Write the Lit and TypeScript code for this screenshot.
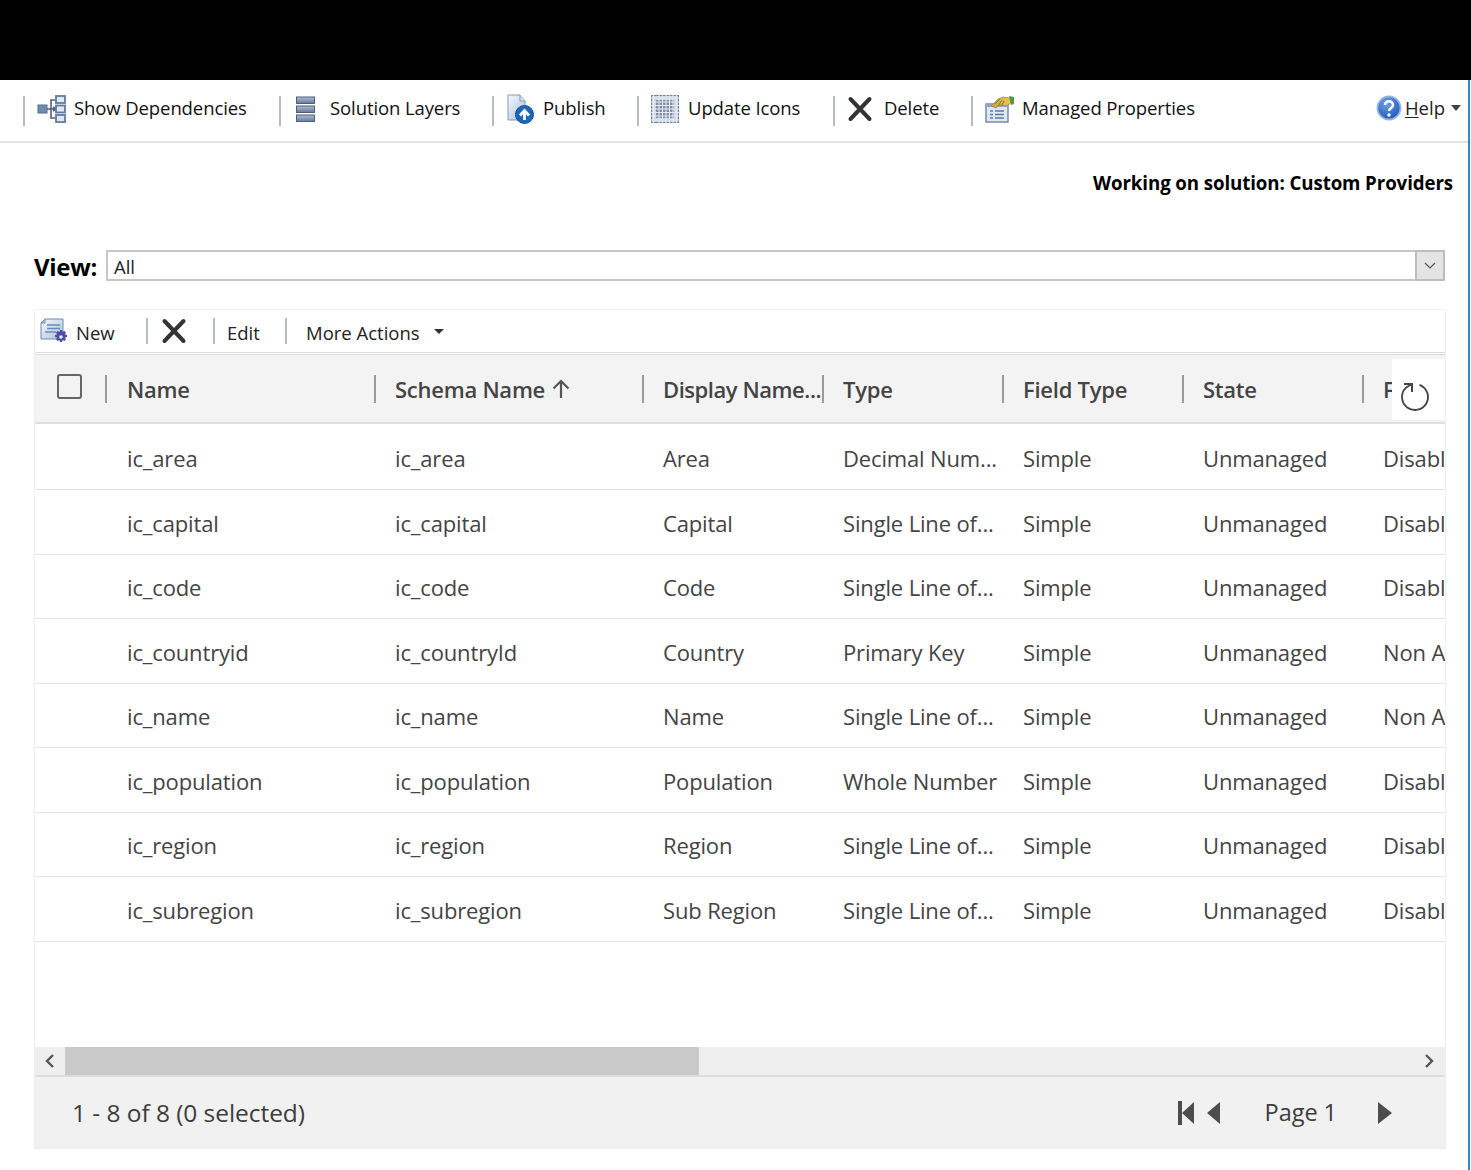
import { LitElement, html, css, svg } from "lit";
import { customElement } from "lit/decorators.js";

const rows = [
  ["ic_area", "ic_area", "Area", "Decimal Num...", "Simple", "Unmanaged", "Disabled"],
  ["ic_capital", "ic_capital", "Capital", "Single Line of...", "Simple", "Unmanaged", "Disabled"],
  ["ic_code", "ic_code", "Code", "Single Line of...", "Simple", "Unmanaged", "Disabled"],
  ["ic_countryid", "ic_countryId", "Country", "Primary Key", "Simple", "Unmanaged", "Non Applicable"],
  ["ic_name", "ic_name", "Name", "Single Line of...", "Simple", "Unmanaged", "Non Applicable"],
  ["ic_population", "ic_population", "Population", "Whole Number", "Simple", "Unmanaged", "Disabled"],
  ["ic_region", "ic_region", "Region", "Single Line of...", "Simple", "Unmanaged", "Disabled"],
  ["ic_subregion", "ic_subregion", "Sub Region", "Single Line of...", "Simple", "Unmanaged", "Disabled"],
];

const defs = svg`<defs>
  <linearGradient id="bl" x1="0" y1="0" x2="0" y2="1"><stop offset="0" stop-color="#aebfd6"/><stop offset="1" stop-color="#64799a"/></linearGradient>
  <linearGradient id="pg" x1="0" y1="0" x2="1" y2="1"><stop offset="0" stop-color="#f6f9fd"/><stop offset="1" stop-color="#a9c0df"/></linearGradient>
  <linearGradient id="gd" x1="0" y1="0" x2="1" y2="0"><stop offset="0" stop-color="#b9a25a"/><stop offset="1" stop-color="#eec94a"/></linearGradient>
</defs>`;

const iconDeps = html`<svg width="30" height="28" viewBox="0 0 30 28">
  <rect x="1" y="10" width="9" height="8" fill="#7089ad" stroke="#566f92"/>
  <path d="M10 14h9M14 14V5h4M14 14v9h4M16 12l3 2-3 2" fill="none" stroke="#4f6077" stroke-width="1.600"/>
  <rect x="19" y="1" width="9" height="7" fill="#dfe8f3" stroke="#607a9c" stroke-width="1.800"/>
  <rect x="19" y="10.500" width="9" height="7" fill="#dfe8f3" stroke="#607a9c" stroke-width="1.800"/>
  <rect x="19" y="20" width="9" height="7" fill="#dfe8f3" stroke="#607a9c" stroke-width="1.800"/></svg>`;
const iconLayers = html`<svg width="30" height="28" viewBox="0 0 30 28">${defs}
  <rect x="3.500" y="2" width="18" height="6.500" fill="url(#bl)" stroke="#505f76"/>
  <rect x="3.500" y="11" width="18" height="6.500" fill="url(#bl)" stroke="#505f76"/>
  <rect x="3.500" y="20" width="18" height="6.500" fill="url(#bl)" stroke="#505f76"/></svg>`;
const iconPublish = html`<svg width="30" height="30" viewBox="0 0 30 30">${defs}
  <path d="M2 1h12l5 6v19H2z" fill="url(#pg)" stroke="#8599b5"/>
  <path d="M14 1v6h5" fill="#dbe5f2" stroke="#8599b5"/>
  <circle cx="18.500" cy="20.500" r="9" fill="#1b68b8" stroke="#144f8c"/>
  <path d="M18.500 26v-8M14 21.500l4.500-5 4.500 5" fill="none" stroke="#fff" stroke-width="2.800"/></svg>`;
const iconGrid = html`<svg width="28" height="28" viewBox="0 0 28 28">
  <rect x="0.500" y="0.500" width="27" height="27" fill="#ccd6e4" stroke="#71849f"/>
  <rect x="5" y="5" width="18" height="18" fill="#808fa6"/>
  <path d="M2.500 0v28M8 0v28M11.500 0v28M15 0v28M18.500 0v28M22 0v28M25.500 0v28M0 3h28M0 7h28M0 10.500h28M0 14h28M0 17.500h28M0 21h28M0 25h28" stroke="#e6ebf2" stroke-width="1"/></svg>`;
const iconX = html`<svg width="26" height="26" viewBox="0 0 26 26">
  <path d="M3.500 3l19 20M22.500 3l-19 20" fill="none" stroke="#333" stroke-width="4" stroke-linecap="round"/></svg>`;
const iconManaged = html`<svg width="30" height="28" viewBox="0 0 30 28">${defs}
  <rect x="1" y="9" width="22" height="18" fill="#dfe8f3" stroke="#6f84a1" stroke-width="1.400"/>
  <rect x="1" y="9" width="22" height="3" fill="#8ea5c4"/>
  <path d="M5 16h3M10 16h9M5 19.500h3M10 19.500h9M5 23h3M10 23h9" stroke="#5d789e" stroke-width="1.400"/>
  <path d="M6 11L13 4l5-2 7 1 1 5-5 3-6-1-4 3z" fill="url(#gd)" stroke="#a0842a" stroke-width="0.700"/>
  <path d="M10 9l5-5M13 11l4-6M17 10l2-4" stroke="#8f7524" stroke-width="0.900"/>
  <path d="M24 1l5 1v7l-3 1z" fill="#4f9a3c"/></svg>`;
const iconHelp = html`<svg width="26" height="26" viewBox="0 0 26 26">
  <defs><radialGradient id="hp" cx="0.400" cy="0.300" r="0.800"><stop offset="0" stop-color="#6fa3ea"/><stop offset="1" stop-color="#184cb0"/></radialGradient></defs>
  <circle cx="13" cy="13" r="11.500" fill="url(#hp)" stroke="#8fb2e0" stroke-width="1.800"/>
  <path d="M9 10c0-5 8-5 8 0 0 3-4 3-4 6" fill="none" stroke="#fff" stroke-width="2.500"/>
  <circle cx="13" cy="20" r="1.700" fill="#fff"/></svg>`;
const iconNew = html`<svg width="28" height="26" viewBox="0 0 28 26">${defs}
  <path d="M5 1h18v20H1V5z" fill="url(#pg)" stroke="#6f89ad"/>
  <path d="M1 5h4V1z" fill="#b7c9e0" stroke="#6f89ad"/>
  <path d="M7 7h13M7 10.500h13M5 14h11" stroke="#6d8cb5" stroke-width="1.500"/>
  <path d="M20 12l2 0 .6 2 1.800-.9 1.500 1.500-.9 1.800 2 .6v2l-2 .6.900 1.800-1.500 1.500-1.800-.9-.6 2h-2l-.6-2-1.800.9-1.500-1.500.9-1.800-2-.6v-2l2-.6-.9-1.800 1.500-1.500 1.800.9z" fill="#4f4ca8"/>
  <circle cx="21" cy="19" r="1.800" fill="#e9eaf7"/></svg>`;

const tools = [
  { label: "Show Dependencies", icon: iconDeps },
  { label: "Solution Layers", icon: iconLayers },
  { label: "Publish", icon: iconPublish },
  { label: "Update Icons", icon: iconGrid },
  { label: "Delete", icon: iconX },
  { label: "Managed Properties", icon: iconManaged },
];
const columns = ["Name", "Schema Name", "Display Name...", "Type", "Field Type", "State", "Fi"];

@customElement("app-root")
export class AppRoot extends LitElement {
  static styles = css`
    :host { display: block; width: 1471px; height: 1170px; overflow: hidden; background: #fff; position: relative;
      font-family: "Open Sans", "Noto Sans", sans-serif; color: #000; }
    .black { height: 80px; background: #000; }
    .edge { position: absolute; right: 1px; top: 80px; bottom: 0; width: 2px; background: #2f86d6; }
    .bar { height: 61px; border-bottom: 2px solid #e2e2e2; display: grid; padding-left: 23px;
      grid-template-columns: 256px 213px 145px 196px 138px 1fr auto; align-items: center; }
    .tool { display: flex; align-items: center; height: 30px; border-left: 2px solid #b9bcbf; padding-left: 12px; }
    .tool .ic { width: 37px; flex: none; display: flex; align-items: center; position: relative; top: -2px; }
    .tool span { font-size: 18.500px; letter-spacing: -0.100px; white-space: nowrap; color: #111; position: relative; top: -3px; }
    .help { display: flex; align-items: center; padding-right: 9px; font-size: 18.500px; color: #222; position: relative; left: -1px; top: -3px; }
    .help svg { margin-right: 3px; }
    .help u { text-underline-offset: 2px; }
    .help i { width: 0; height: 0; border: 5px solid transparent; border-top: 6px solid #444; border-bottom: 0; margin-left: 6px; }
    .msg { text-align: right; padding: 27px 18px 0 0; height: 77px; box-sizing: border-box; font-size: 18.700px; font-weight: 700; line-height: 25px; letter-spacing: -0.100px; }
    .view { display: flex; align-items: center; height: 31px; margin: 30px 26px 0 34px; }
    .view b { width: 72px; font-size: 24px; letter-spacing: -0.300px; flex: none; position: relative; top: 1px; }
    .select { flex: 1; height: 31px; box-sizing: border-box; border: 2px solid #c6c6c6; border-right: none; display: flex; align-items: center; justify-content: space-between;
      padding-left: 6px; font-size: 18.500px; color: #222; line-height: 31px; }
    .val { position: relative; top: 1px; }
    .drop { width: 30px; height: 31px; margin: -2px 0; background: #e4e4e4; border: 2px solid #bdbdbd; box-sizing: border-box; display: flex; align-items: center; justify-content: center; }
    .panel { margin: 28px 25px 0 34px; border: 1px solid #efefef; border-bottom-width: 2px; position: relative; }
    .sub { height: 42px; display: flex; align-items: center; border-bottom: 3px double #dcdcdc; font-size: 18.500px; color: #222; }
    .sub > div { display: flex; align-items: center; height: 26px; }
    .new { width: 111px; padding-left: 5px; gap: 8px; box-sizing: border-box; }
    .del { width: 67px; border-left: 2px solid #b9bcbf; padding-left: 13px; box-sizing: border-box; }
    .edit { width: 72px; border-left: 2px solid #b9bcbf; padding-left: 12px; box-sizing: border-box; }
    .more { border-left: 2px solid #b9bcbf; padding-left: 19px; }
    .more i { width: 0; height: 0; border: 5px solid transparent; border-top: 5px solid #333; border-bottom: 0; margin-left: 14px; }
    .txt { position: relative; top: 1px; }
    .grid { overflow: hidden; height: 722px; position: relative; }
    .head, .row { display: grid; grid-template-columns: 70px 269px 268px 180px 180px 180px 180px 84px; }
    .head { height: 67px; background: #f3f3f3; border-bottom: 2px solid #dedede; align-items: center; color: #444; font-weight: 600; font-size: 22px; letter-spacing: -0.250px; }
    .chk { display: flex; justify-content: center; }
    .chk div { width: 25px; height: 25px; box-sizing: border-box; border: 2px solid #666; border-radius: 3px; position: relative; top: -2px; left: -1px; }
    .hc { height: 28px; border-left: 2px solid #9a9a9a; padding-left: 19px; display: flex; align-items: center; white-space: nowrap; overflow: hidden; line-height: 28px; }
    .hc.name { padding-left: 20px; }
    .hc.tight { letter-spacing: -0.450px; }
    .hc svg { margin-left: 7px; flex: none; }
    .row { height: 63.500px; border-bottom: 1px solid #e3e3e3; align-items: center; font-size: 22px; letter-spacing: -0.150px; color: #444; }
    .row.first { height: 65px; }
    .cell { padding-left: 19px; margin-left: 2px; white-space: nowrap; overflow: hidden; position: relative; top: 1px; }
    .cell.name { padding-left: 20px; }
    .spin { position: absolute; right: 0; top: 4px; width: 53px; height: 61px; background: #fff; display: flex; align-items: center; justify-content: center; }
    .spin svg { margin: 15px 8px 0 0; }
    .scroll { height: 28px; background: #efefef; display: flex; align-items: center; justify-content: space-between; border-bottom: 2px solid #dcdcdc; position: absolute; left: 0; right: 0; bottom: 0; }
    .thumb { position: absolute; left: 30px; width: 634px; top: 0; bottom: 0; background: #c9c9c9; }
    .scroll svg { margin: 0 11px 0 10px; }
    .foot { height: 70px; background: #f1f1f1; display: flex; align-items: center; padding-left: 37px; color: #3d3d3d; font-size: 24.500px; letter-spacing: -0.050px; }
    .pager { margin-left: auto; display: flex; align-items: center; padding-right: 53px; position: relative; top: 1px; }
    .pager .prev { margin-left: 11px; }
    .pager .pg { margin: 0 41px 0 45px; font-size: 23.500px; position: relative; top: -1px; }
  `;

  render() {
    return html`
      <div class="black"></div>
      <div class="edge"></div>
      <div class="bar">
        ${tools.map((t) => html`<div class="tool"><div class="ic">${t.icon}</div><span>${t.label}</span></div>`)}
        <div class="help">${iconHelp}<span><u>H</u>elp</span><i></i></div>
      </div>
      <div class="msg">Working on solution: Custom Providers</div>
      <div class="view">
        <b>View:</b>
        <div class="select"><span class="val">All</span>
          <div class="drop"><svg width="12" height="8" viewBox="0 0 12 8"><path d="M1 1l5 5 5-5" fill="none" stroke="#555" stroke-width="1.200"/></svg></div>
        </div>
      </div>
      <div class="panel">
        <div class="sub">
          <div class="new">${iconNew}<span class="txt">New</span></div>
          <div class="del"><svg width="26" height="26" viewBox="0 0 26 26"><path d="M3.500 3l19 20M22.500 3l-19 20" fill="none" stroke="#333" stroke-width="4" stroke-linecap="round"/></svg></div>
          <div class="edit"><span class="txt">Edit</span></div>
          <div class="more"><span class="txt">More Actions</span><i></i></div>
        </div>
        <div class="grid">
          <div class="head">
            <div class="chk"><div></div></div>
            ${columns.map((c, i) => html`<div class="hc ${i === 0 ? "name" : ""} ${i === 2 ? "tight" : ""}">${c}${c === "Schema Name"
              ? html`<svg width="18" height="20" viewBox="0 0 18 20"><path d="M9 19V2M1.500 9.500L9 2l7.500 7.500" fill="none" stroke="#555" stroke-width="2.200"/></svg>`
              : ""}</div>`)}
          </div>
          ${rows.map((r, i) => html`<div class="row ${i === 0 ? "first" : ""}"><div></div>${r.map((c, j) => html`<div class="cell ${j === 0 ? "name" : ""}">${c}</div>`)}</div>`)}
          <div class="spin"><svg width="32" height="32" viewBox="0 0 32 32" fill="none" stroke="#444" stroke-width="1.800">
            <path d="M20.500 3.800A13 13 0 1 1 6.800 6.800L13 3"/><path d="M5 3h8v8" stroke-width="2"/></svg></div>
          <div class="scroll">
            <div class="thumb"></div>
            <svg width="10" height="14" viewBox="0 0 10 14"><path d="M8 1L2 7l6 6" fill="none" stroke="#555" stroke-width="2.400"/></svg>
            <svg width="10" height="14" viewBox="0 0 10 14"><path d="M2 1l6 6-6 6" fill="none" stroke="#555" stroke-width="2.400"/></svg>
          </div>
        </div>
        <div class="foot">
          <span>1 - 8 of 8 (0 selected)</span>
          <div class="pager">
            <svg width="18" height="26" viewBox="0 0 18 26"><path d="M1 1h4v24H1zM17 2v22L5 13z" fill="#4d4d4d"/></svg>
            <svg class="prev" width="14" height="26" viewBox="0 0 14 26"><path d="M14 2v22L1 13z" fill="#4d4d4d"/></svg>
            <span class="pg">Page 1</span>
            <svg width="14" height="26" viewBox="0 0 14 26"><path d="M0 2v22l14-11z" fill="#4d4d4d"/></svg>
          </div>
        </div>
      </div>
    `;
  }
}
